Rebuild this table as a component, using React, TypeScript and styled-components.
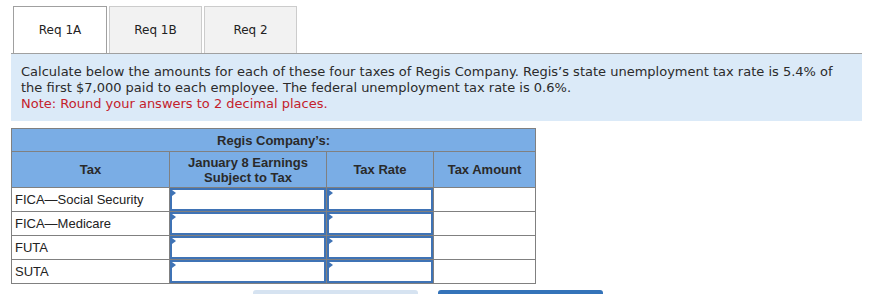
import React from 'react';
import styled, { createGlobalStyle } from 'styled-components';

const GlobalStyle = createGlobalStyle`
  html, body {
    margin: 0;
    padding: 0;
    background: #ffffff;
    overflow: hidden;
  }
`;

type TabType = {
  label: string;
  active?: boolean;
};

const tabs: TabType[] = [{ label: 'Req 1A', active: true }, { label: 'Req 1B' }, { label: 'Req 2' }];

const rows = ['FICA\u2014Social Security', 'FICA\u2014Medicare', 'FUTA', 'SUTA'];

const AnswerInput = () => {
  return (
    <InputBox>
      <Marker />
    </InputBox>
  );
};

export default function App() {
  return (
    <Page>
      <GlobalStyle />
      <TabStrip>
        {tabs.map((t) => (
          <Tab key={t.label} $active={t.active}>
            {t.label}
          </Tab>
        ))}
      </TabStrip>
      <Instructions>
        Calculate below the amounts for each of these four taxes of Regis Company. Regis’s state
        unemployment tax rate is 5.4% of the first $7,000 paid to each employee. The federal
        unemployment tax rate is 0.6%.
        <Note>Note: Round your answers to 2 decimal places.</Note>
      </Instructions>
      <Table>
        <colgroup>
          <col style={{ width: 158 }} />
          <col style={{ width: 157 }} />
          <col style={{ width: 107 }} />
          <col style={{ width: 102 }} />
        </colgroup>
        <thead>
          <tr>
            <HeadCell colSpan={4} $h={23}>
              Regis Company’s:
            </HeadCell>
          </tr>
          <tr>
            <HeadCell $h={36}>Tax</HeadCell>
            <HeadCell $h={36}>
              January 8 Earnings
              <br />
              Subject to Tax
            </HeadCell>
            <HeadCell $h={36}>Tax Rate</HeadCell>
            <HeadCell $h={36}>Tax Amount</HeadCell>
          </tr>
        </thead>
        <tbody>
          {rows.map((r) => (
            <tr key={r}>
              <LabelCell>{r}</LabelCell>
              <InputCell>
                <AnswerInput />
              </InputCell>
              <InputCell>
                <AnswerInput />
              </InputCell>
              <Cell />
            </tr>
          ))}
        </tbody>
      </Table>
      <ButtonRow>
        <NavButton $variant="light" />
        <NavButton $variant="dark" />
      </ButtonRow>
    </Page>
  );
}

const Page = styled.div`
  width: 851px;
  padding: 6px 0 0 11px;
  height: 288px;
  overflow: hidden;
`;

const TabStrip = styled.div`
  display: flex;
  gap: 2px;
  padding-left: 2px;
  border-bottom: 1px solid #a0a0a0;
`;

const Tab = styled.div<{ $active?: boolean }>`
  width: ${(p) => (p.$active ? 92 : 91)}px;
  height: 46px;
  display: flex;
  align-items: center;
  justify-content: center;
  background: ${(p) => (p.$active ? '#ffffff' : '#f2f2f2')};
  border: 1px solid ${(p) => (p.$active ? '#a0a0a0' : '#cccccc')};
  border-bottom: none;
  font-family: 'DejaVu Sans', Verdana, sans-serif;
  font-size: 12px;
  color: #222222;
`;

const Instructions = styled.div`
  background: #dbeaf8;
  padding: 10px 10px 9px 10px;
  font-family: 'DejaVu Sans', Verdana, sans-serif;
  font-size: 13px;
  line-height: 16px;
  color: #2b2b2b;
`;

const Note = styled.div`
  color: #c4212b;
`;

const Table = styled.table`
  margin-top: 7px;
  border-collapse: collapse;
  table-layout: fixed;
  width: 524px;
  font-family: 'Liberation Sans', Arial, sans-serif;
  font-size: 13px;
`;

const HeadCell = styled.th<{ $h: number }>`
  height: ${(p) => p.$h - 1}px;
  padding: 0;
  background: #7aade5;
  border: 1px solid #808080;
  color: #2a2a2a;
  font-weight: bold;
  line-height: 15px;
  text-align: center;
`;

const Cell = styled.td`
  height: 23px;
  padding: 0;
  border: 1px solid #808080;
`;

const LabelCell = styled(Cell)`
  padding-left: 3px;
  color: #222222;
`;

const InputCell = styled(Cell)`
  padding: 0;
`;

const InputBox = styled.div`
  position: relative;
  height: 19px;
  border: 2px solid #3f73b5;
  background: #ffffff;
`;

const Marker = styled.span`
  position: absolute;
  left: 0;
  top: 0;
  width: 0;
  height: 0;
  border-top: 3px solid transparent;
  border-bottom: 3px solid transparent;
  border-left: 4px solid #3f73b5;
`;

const ButtonRow = styled.div`
  display: flex;
  gap: 20px;
  padding-left: 242px;
  margin-top: 6px;
`;

const NavButton = styled.div<{ $variant: 'light' | 'dark' }>`
  width: 165px;
  height: 36px;
  border-radius: 3px 3px 0 0;
  background: ${(p) => (p.$variant === 'light' ? '#d6e3f1' : '#3473b9')};
`;
